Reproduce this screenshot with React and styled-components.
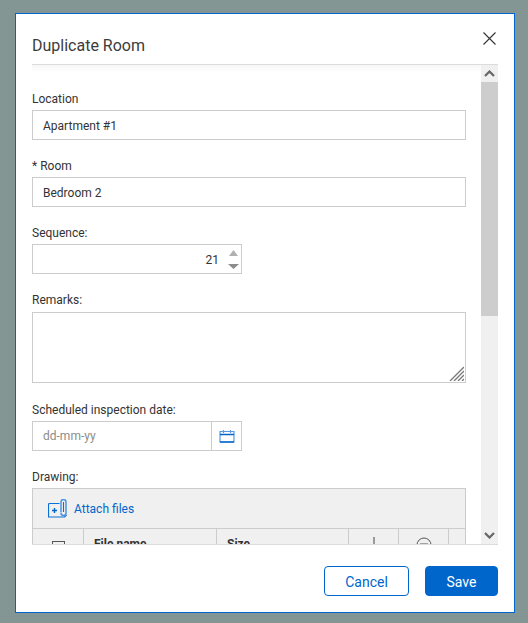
import React from 'react'
import styled, { createGlobalStyle } from 'styled-components'

const Global = createGlobalStyle`
html, body { margin: 0; padding: 0; background: #839694; }
* { box-sizing: border-box; }
`

function App() {
    return (
        <Page>
            <Global />
            <Modal>
                <Header>
                    <Title>Duplicate Room</Title>
                    <CloseButton aria-label="Close">
                        <svg width="13" height="13" viewBox="0 0 13 13">
                            <path d="M.5.5l12 12M12.500.5l-12 12" stroke="#333" strokeWidth="1.100" fill="none" />
                        </svg>
                    </CloseButton>
                </Header>
                <Body>
                    <Form>
                        <Field>
                            <Label>Location</Label>
                            <TextBox>Apartment #1</TextBox>
                        </Field>
                        <Field>
                            <Label>* Room</Label>
                            <TextBox>Bedroom 2</TextBox>
                        </Field>
                        <Field>
                            <Label>Sequence:</Label>
                            <NumberBox>
                                <NumberValue>21</NumberValue>
                                <Spinner>
                                    <svg width="9" height="6" viewBox="0 0 9 6"><path d="M4.500 0L9 6H0z" fill="#b0b0b0" /></svg>
                                    <svg width="11" height="5" viewBox="0 0 11 5"><path d="M0 0h11L5.500 5z" fill="#8c8c8c" /></svg>
                                </Spinner>
                            </NumberBox>
                        </Field>
                        <Field $gap={18}>
                            <Label $tall>Remarks:</Label>
                            <TextArea>
                                <ResizeGrip width="15" height="15" viewBox="0 0 15 15">
                                    <path d="M1 15L15 1M5 15L15 5M9 15l6-6M13 15l2-2" stroke="#7a7a7a" strokeWidth="1.400" fill="none" />
                                </ResizeGrip>
                            </TextArea>
                        </Field>
                        <Field>
                            <Label>Scheduled inspection date:</Label>
                            <DateBox>
                                <Placeholder>dd-mm-yy</Placeholder>
                                <DateButton>
                                    <svg width="16" height="14" viewBox="0 0 16 14" fill="none">
                                        <path d="M1 2.500h14v10.500H1z" stroke="#5a9be0" strokeWidth="1.200" />
                                        <path d="M1 5.500h14M1 13h14" stroke="#0066cc" strokeWidth="1.300" />
                                        <path d="M4.500 1v3M11.500 1v3" stroke="#5a9be0" strokeWidth="1.200" />
                                    </svg>
                                </DateButton>
                            </DateBox>
                        </Field>
                        <Field>
                            <Label>Drawing:</Label>
                            <FileGrid>
                                <Toolbar>
                                    <AttachLink>
                                        <svg width="20" height="19" viewBox="0 0 20 19" fill="none" stroke="#0a6fd6">
                                            <path d="M11.500 4.500H1.500a1 1 0 0 0-1 1V18h16l2-2" strokeWidth="1.200" />
                                            <path d="M4 11.500h5M6.500 9v5" stroke="#0066cc" strokeWidth="1.400" />
                                            <path d="M13 13.500V3a2.500 2.500 0 0 1 5 0v11a2.500 2.500 0 0 1-5 0" stroke="#4a94e0" strokeWidth="1.500" />
                                            <path d="M15.500 3v10" stroke="#0a6fd6" strokeWidth="1.100" />
                                        </svg>
                                        Attach files
                                    </AttachLink>
                                </Toolbar>
                                <HeaderRow>
                                    <HeaderCell $w={51} $center><Checkbox /></HeaderCell>
                                    <HeaderCell $w={133}>File name</HeaderCell>
                                    <HeaderCell $w={132}>Size</HeaderCell>
                                    <HeaderCell $w={50} $center>
                                        <svg width="2" height="14" viewBox="0 0 2 14"><path d="M1 0v14" stroke="#444" strokeWidth="1" /></svg>
                                    </HeaderCell>
                                    <HeaderCell $w={50} $center>
                                        <svg width="16" height="16" viewBox="0 0 16 16" fill="none"><circle cx="8" cy="8" r="7" stroke="#555" /><path d="M4 7h8" stroke="#555" /></svg>
                                    </HeaderCell>
                                    <HeaderCell $w={16} $last />
                                </HeaderRow>
                            </FileGrid>
                        </Field>
                    </Form>
                    <ScrollBar>
                        <ScrollArrow $top>
                            <svg width="11" height="7" viewBox="0 0 11 7"><path d="M1 6l4.500-4.500L10 6" stroke="#666" strokeWidth="2.200" fill="none" /></svg>
                        </ScrollArrow>
                        <ScrollThumb />
                        <ScrollTrack />
                        <ScrollArrow>
                            <svg width="11" height="7" viewBox="0 0 11 7"><path d="M1 1l4.500 4.500L10 1" stroke="#666" strokeWidth="2.200" fill="none" /></svg>
                        </ScrollArrow>
                    </ScrollBar>
                </Body>
                <Footer>
                    <Button>Cancel</Button>
                    <Button $primary>Save</Button>
                </Footer>
            </Modal>
        </Page>
    )
}
export default App

const Page = styled.div`
width: 528px;
height: 623px;
padding: 13px 13px 10px 15px;
font-family: Roboto, "Liberation Sans", sans-serif;
color: #333;
`
const Modal = styled.div`
width: 500px;
height: 600px;
background: #fff;
border: 1px solid #0066cc;
padding: 0 16px;
display: flex;
flex-direction: column;
`
const Header = styled.div`
height: 51px;
display: flex;
align-items: flex-start;
justify-content: space-between;
flex-shrink: 0;
border-bottom: 1px solid #dcdcdc;
`
const Title = styled.h1`
margin: 22px 0 0;
font-size: 16px;
line-height: 19px;
font-weight: 400;
color: #3c3c3c;
`
const CloseButton = styled.div`
margin: 18px 2px 0 0;
height: 13px;
line-height: 0;
`
const Body = styled.div`
height: 480px;
flex-shrink: 0;
display: flex;
overflow: hidden;
border-bottom: 1px solid #dcdcdc;
background: linear-gradient(#f7f7f7, #fff 8px);
`
const Form = styled.div`
width: 449px;
flex-shrink: 0;
padding-top: 25px;
padding-right: 15px;
overflow: hidden;
`
const Field = styled.div`
margin-bottom: ${props => props.$gap || 17}px;
`
const Label = styled.div`
font-size: 12px;
line-height: 16px;
padding-top: 1px;
padding-bottom: ${props => props.$tall ? 4 : 3}px;
color: #333;
`
const TextBox = styled.div`
height: 30px;
border: 1px solid #cccccc;
padding: 0 10px;
font-size: 12px;
line-height: 30px;
color: #333;
`
const NumberBox = styled.div`
width: 210px;
height: 30px;
border: 1px solid #cccccc;
padding-right: 2px;
display: flex;
align-items: center;
justify-content: flex-end;
font-size: 12px;
color: #333;
`
const NumberValue = styled.span`
line-height: 30px;
padding-top: 2px;
`
const Spinner = styled.div`
display: flex;
flex-direction: column;
align-items: center;
gap: 8px;
margin-left: 9px;
padding-top: 1px;
svg { display: block; }
`
const TextArea = styled.div`
position: relative;
height: 71px;
border: 1px solid #cccccc;
`
const ResizeGrip = styled.svg`
position: absolute;
right: 1px;
bottom: 1px;
`
const DateBox = styled.div`
width: 210px;
height: 30px;
border: 1px solid #cccccc;
display: flex;
align-items: center;
justify-content: space-between;
`
const Placeholder = styled.span`
padding-left: 10px;
font-size: 12px;
line-height: 28px;
color: #8c8c8c;
`
const DateButton = styled.div`
width: 30px;
height: 28px;
border-left: 1px solid #cccccc;
display: flex;
align-items: center;
justify-content: center;
`
const FileGrid = styled.div`
width: 434px;
border: 1px solid #cccccc;
background: #f0f0f0;
`
const Toolbar = styled.div`
height: 40px;
padding-left: 15px;
display: flex;
align-items: center;
border-bottom: 1px solid #cccccc;
`
const AttachLink = styled.div`
display: flex;
align-items: center;
gap: 6px;
font-size: 12px;
line-height: 16px;
color: #0066cc;
`
const HeaderRow = styled.div`
display: flex;
height: 36px;
`
const HeaderCell = styled.div`
width: ${props => props.$w}px;
flex-shrink: 0;
padding: 8px 10px 0;
display: flex;
align-items: flex-start;
justify-content: ${props => props.$center ? 'center' : 'flex-start'};
font-size: 12px;
line-height: 14px;
font-weight: 700;
color: #333;
border-right: ${props => props.$last ? 'none' : '1px solid #cccccc'};
svg { flex-shrink: 0; }
`
const Checkbox = styled.div`
width: 13px;
height: 13px;
margin-top: 4px;
border: 1px solid #555;
flex-shrink: 0;
`
const ScrollBar = styled.div`
width: 17px;
flex-shrink: 0;
display: flex;
flex-direction: column;
background: #f0f0f0;
`
const ScrollArrow = styled.div`
height: 17px;
flex-shrink: 0;
display: flex;
align-items: center;
justify-content: center;
`
const ScrollThumb = styled.div`
height: 234px;
flex-shrink: 0;
background: #cdcdcd;
`
const ScrollTrack = styled.div`
flex: 1;
`
const Footer = styled.div`
flex: 1;
display: flex;
justify-content: flex-end;
gap: 16px;
padding-top: 21px;
`
const Button = styled.div`
width: ${props => props.$primary ? 73 : 85}px;
height: 30px;
border-radius: 4px;
border: 1px solid #0066cc;
background: ${props => props.$primary ? '#0066cc' : '#fff'};
color: ${props => props.$primary ? '#fff' : '#0066cc'};
font-size: 14px;
line-height: 31px;
text-align: center;
`
